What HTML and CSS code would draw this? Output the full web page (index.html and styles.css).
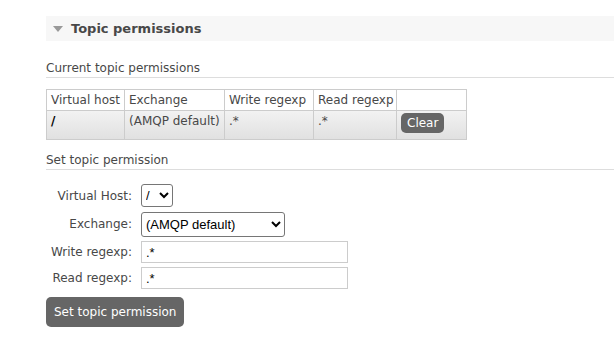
FILE: index.html
```html
<!DOCTYPE html>
<html lang="en">
<head>
    <meta charset="UTF-8">
    <title>Topic permissions</title>
    <link rel="stylesheet" href="styles.css">
</head>
<body>
    <div class="section">
        <h2 class="section-title"><span class="arrow"></span>Topic permissions</h2>

        <h3 class="first">Current topic permissions</h3>
        <table class="list">
            <thead>
                <tr>
                    <th class="c-vhost">Virtual host</th>
                    <th class="c-exchange">Exchange</th>
                    <th class="c-write">Write regexp</th>
                    <th class="c-read">Read regexp</th>
                    <th class="c-action"></th>
                </tr>
            </thead>
            <tbody>
                <tr>
                    <td class="vhost">/</td>
                    <td>(AMQP default)</td>
                    <td>.*</td>
                    <td>.*</td>
                    <td><button class="btn btn-small">Clear</button></td>
                </tr>
            </tbody>
        </table>

        <h3>Set topic permission</h3>
        <form class="form">
            <label for="vhost">Virtual Host:</label>
            <div class="control"><select id="vhost" class="sel-vhost"><option>/</option></select></div>

            <label for="exchange">Exchange:</label>
            <div class="control"><select id="exchange" class="sel-exchange"><option>(AMQP default)</option></select></div>

            <label for="write">Write regexp:</label>
            <div class="control"><input type="text" id="write" value=".*"></div>

            <label for="read">Read regexp:</label>
            <div class="control"><input type="text" id="read" value=".*"></div>
        </form>
        <button class="btn btn-large">Set topic permission</button>
    </div>
</body>
</html>
```

FILE: styles.css
```css
body {
    margin: 0;
    font-family: "DejaVu Sans", Verdana, sans-serif;
    font-size: 12px;
    color: #484848;
    background: #ffffff;
    overflow: hidden;
}
.section {
    margin-left: 46px;
    padding-top: 16px;
}
.section-title {
    display: flex;
    align-items: center;
    height: 25px;
    margin: 0;
    padding-left: 7px;
    background: #f7f7f7;
    font-size: 13px;
    font-weight: bold;
    color: #484848;
}
.arrow {
    width: 0;
    height: 0;
    margin-right: 8px;
    border-left: 5px solid transparent;
    border-right: 5px solid transparent;
    border-top: 6px solid #999999;
}
h3 {
    margin: 13px 0 11px;
    padding-bottom: 2px;
    border-bottom: 1px solid #dddddd;
    font-size: 12px;
    font-weight: normal;
    color: #484848;
}
h3.first {
    margin-top: 20px;
}
.list {
    border-collapse: collapse;
    border: 1px solid #cccccc;
    table-layout: fixed;
    width: 420px;
}
.list th,
.list td {
    border: 1px solid #cccccc;
    padding: 3px 4px;
    text-align: left;
    vertical-align: top;
    font-weight: normal;
    color: #484848;
    white-space: nowrap;
}
.list th {
    background: #ffffff;
    height: 13px;
}
.list tbody tr {
    background: linear-gradient(#f2f2f2, #e0e0e0);
}
.list td {
    height: 22px;
}
.c-vhost { width: 69px; }
.c-exchange { width: 91px; }
.c-write { width: 80px; }
.c-read { width: 74px; }
.c-action { width: 61px; }
.list td.vhost {
    font-weight: bold;
    color: #000000;
}
.btn {
    border: none;
    border-radius: 5px;
    background: #666666;
    color: #ffffff;
    font-family: "DejaVu Sans", Verdana, sans-serif;
    cursor: pointer;
}
.btn-small {
    margin-top: -1px;
    padding: 3px 6px;
    font-size: 12px;
}
.btn-large {
    margin-top: 8px;
    padding: 8px 8px;
    font-size: 12px;
}
.form {
    display: grid;
    grid-template-columns: 86px auto;
    column-gap: 9px;
    row-gap: 4px;
    align-items: center;
    margin-top: 14px;
}
.form label {
    text-align: right;
    white-space: nowrap;
}
.control {
    display: flex;
}
select,
input {
    font-family: "Liberation Sans", Arial, sans-serif;
    font-size: 13px;
    color: #000000;
}
select {
    border: 1px solid #767676;
    border-radius: 3px;
    background: #ffffff;
}
.sel-vhost {
    width: 32px;
    height: 23px;
}
.sel-exchange {
    width: 144px;
    height: 25px;
    margin-top: 1px;
}
.form input {
    width: 207px;
    height: 22px;
    box-sizing: border-box;
    border: 1px solid #cccccc;
    padding: 2px 4px;
}
```
